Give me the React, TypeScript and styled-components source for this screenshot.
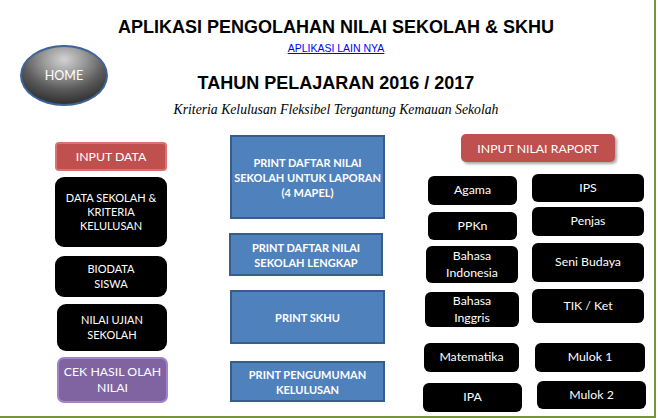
import styled, { createGlobalStyle } from "styled-components"

const GlobalStyle = createGlobalStyle`
  html, body {
    margin: 0;
    padding: 0;
    background: #ffffff;
  }
  body {
    font-family: "Liberation Sans", Arial, sans-serif;
  }
`

const leftMenu = [
  { label: "DATA SEKOLAH &\nKRITERIA\nKELULUSAN", h: 70, mt: 6, ml: 0, w: 112 },
  { label: "BIODATA\nSISWA", h: 41, mt: 9, ml: 0, w: 112 },
  { label: "NILAI UJIAN\nSEKOLAH", h: 47, mt: 7, ml: 2, w: 110 },
]

const printMenu = [
  { label: "PRINT DAFTAR NILAI\nSEKOLAH UNTUK LAPORAN\n(4 MAPEL)", h: 84, mt: 0, ml: 1, w: 155 },
  { label: "PRINT DAFTAR NILAI\nSEKOLAH LENGKAP", h: 43, mt: 14, ml: 0, w: 154 },
  { label: "PRINT SKHU", h: 54, mt: 14, ml: 1, w: 155 },
  { label: "PRINT PENGUMUMAN\nKELULUSAN", h: 41, mt: 17, ml: 1, w: 155 },
]

const subjectsLeft = [
  { label: "Agama", h: 29, mt: 14, ml: 5, w: 89 },
  { label: "PPKn", h: 28, mt: 7, ml: 5, w: 89 },
  { label: "Bahasa\nIndonesia", h: 37, mt: 6, ml: 3, w: 92 },
  { label: "Bahasa\nInggris", h: 35, mt: 9, ml: 2, w: 94 },
  { label: "Matematika", h: 29, mt: 16, ml: 1, w: 95 },
  { label: "IPA", h: 29, mt: 11, ml: 0, w: 99 },
]

const subjectsRight = [
  { label: "IPS", h: 28, mt: 12, ml: 0, w: 112 },
  { label: "Penjas", h: 29, mt: 5, ml: 0, w: 112 },
  { label: "Seni Budaya", h: 39, mt: 7, ml: 0, w: 112 },
  { label: "TIK / Ket", h: 34, mt: 7, ml: 0, w: 112 },
  { label: "Mulok 1", h: 29, mt: 20, ml: 3, w: 110 },
  { label: "Mulok 2", h: 28, mt: 9, ml: 5, w: 109 },
]

export default function App() {
  return (
    <>
      <GlobalStyle />
      <Sheet>
        <Header>
          <HomeCell>
            <HomeButton>HOME</HomeButton>
          </HomeCell>
          <TitleBlock>
            <MainTitle>APLIKASI PENGOLAHAN NILAI SEKOLAH &amp; SKHU</MainTitle>
            <OtherLink href="#">APLIKASI LAIN NYA</OtherLink>
            <YearTitle>TAHUN PELAJARAN 2016 / 2017</YearTitle>
            <Tagline>Kriteria Kelulusan Fleksibel Tergantung Kemauan Sekolah</Tagline>
          </TitleBlock>
          <div />
        </Header>

        <Body>
          <LeftColumn>
            <RedButton>INPUT DATA</RedButton>
            {leftMenu.map((m) => (
              <BlackMenu key={m.label} $h={m.h} $mt={m.mt} $ml={m.ml} $w={m.w}>
                {m.label}
              </BlackMenu>
            ))}
            <PurpleButton>CEK HASIL OLAH<br />NILAI</PurpleButton>
          </LeftColumn>

          <MiddleColumn>
            {printMenu.map((m) => (
              <PrintBox key={m.label} $h={m.h} $mt={m.mt} $ml={m.ml} $w={m.w}>
                {m.label}
              </PrintBox>
            ))}
          </MiddleColumn>

          <RightColumn>
            <RaportButton>INPUT NILAI RAPORT</RaportButton>
            <SubjectGrid>
              <SubjectColumn>
                {subjectsLeft.map((s) => (
                  <Subject key={s.label} $h={s.h} $mt={s.mt} $ml={s.ml} $w={s.w}>
                    {s.label}
                  </Subject>
                ))}
              </SubjectColumn>
              <SubjectColumn>
                {subjectsRight.map((s) => (
                  <Subject key={s.label} $h={s.h} $mt={s.mt} $ml={s.ml} $w={s.w}>
                    {s.label}
                  </Subject>
                ))}
              </SubjectColumn>
            </SubjectGrid>
          </RightColumn>
        </Body>
      </Sheet>
    </>
  )
}

type BoxProps = { $h: number; $mt: number; $ml: number; $w: number }

const Sheet = styled.div`
  width: 654px;
  height: 416px;
  border-right: 2px solid #77933c;
  border-bottom: 2px solid #77933c;
  background: #ffffff;
  overflow: hidden;
`

const Header = styled.div`
  height: 128px;
  display: grid;
  grid-template-columns: minmax(0, 1fr) auto minmax(0, 1fr);
`

const HomeCell = styled.div`
  padding: 45px 0 0 20px;
`

const HomeButton = styled.div`
  width: 84px;
  height: 57px;
  border-radius: 50%;
  border: 2px solid #3c6497;
  background: radial-gradient(ellipse 70% 75% at 50% 22%, #d2d2d2 0%, #9a9a9a 35%, #5a5a5a 70%, #353535 100%);
  color: #ffffff;
  font-family: Lato, "Liberation Sans", sans-serif;
  font-size: 12.5px;
  display: flex;
  align-items: center;
  justify-content: center;
`

const TitleBlock = styled.div`
  padding: 16px 0 0 18px;
  display: flex;
  flex-direction: column;
  align-items: center;
  white-space: nowrap;
`

const MainTitle = styled.h1`
  margin: 0;
  font-family: "Liberation Sans", Arial, sans-serif;
  font-size: 18px;
  line-height: 22px;
  font-weight: 700;
  color: #000000;
`

const OtherLink = styled.a`
  margin-top: 3px;
  font-family: "Liberation Sans", Arial, sans-serif;
  font-size: 10.5px;
  line-height: 14px;
  color: #0000ff;
  text-decoration: underline;
`

const YearTitle = styled.h2`
  margin: 17px 0 0;
  font-family: "Liberation Sans", Arial, sans-serif;
  font-size: 18px;
  line-height: 22px;
  font-weight: 700;
  color: #000000;
`

const Tagline = styled.div`
  margin-top: 8px;
  font-family: "Liberation Serif", "Times New Roman", serif;
  font-style: italic;
  font-size: 13.7px;
  line-height: 16px;
  color: #000000;
`

const Body = styled.div`
  display: flex;
  align-items: flex-start;
  padding-left: 55px;
`

const LeftColumn = styled.div`
  width: 113px;
  margin-top: 14px;
  display: flex;
  flex-direction: column;
`

const MiddleColumn = styled.div`
  width: 156px;
  margin: 7px 0 0 61px;
  display: flex;
  flex-direction: column;
`

const RightColumn = styled.div`
  width: 224px;
  margin: 6px 0 0 38px;
  display: flex;
  flex-direction: column;
`

const Label = styled.div`
  display: flex;
  align-items: center;
  justify-content: center;
  text-align: center;
  white-space: pre-line;
  box-sizing: border-box;
  color: #ffffff;
  font-family: Lato, "Liberation Sans", sans-serif;
`

const RedButton = styled(Label)`
  width: 112px;
  height: 29px;
  background: #c0504d;
  border: 2px solid #e0706d;
  border-radius: 4px;
  font-size: 12.3px;
`

const BlackMenu = styled(Label)<BoxProps>`
  width: ${(p) => p.$w}px;
  height: ${(p) => p.$h}px;
  margin: ${(p) => p.$mt}px 0 0 ${(p) => p.$ml}px;
  background: #000000;
  border-radius: 9px;
  font-size: 11px;
  line-height: 14.3px;
`

const PurpleButton = styled(Label)`
  width: 111px;
  height: 46px;
  margin: 6px 0 0 2px;
  background: #8064a2;
  border: 2px solid #9f84c6;
  border-radius: 7px;
  font-size: 12.3px;
  line-height: 16px;
`

const PrintBox = styled(Label)<BoxProps>`
  width: ${(p) => p.$w}px;
  height: ${(p) => p.$h}px;
  margin: ${(p) => p.$mt}px 0 0 ${(p) => p.$ml}px;
  background: #4f81bd;
  border: 2px solid #385d8a;
  font-size: 11px;
  font-weight: 700;
  line-height: 15px;
`

const RaportButton = styled(Label)`
  width: 154px;
  height: 28px;
  margin-left: 38px;
  background: #c0504d;
  border-radius: 5px;
  box-shadow: 2px 2px 3px rgba(0, 0, 0, 0.35);
  font-size: 12.3px;
`

const SubjectGrid = styled.div`
  display: grid;
  grid-template-columns: 99px 114px;
  column-gap: 10px;
`

const SubjectColumn = styled.div`
  display: flex;
  flex-direction: column;
`

const Subject = styled(Label)<BoxProps>`
  width: ${(p) => p.$w}px;
  height: ${(p) => p.$h}px;
  margin: ${(p) => p.$mt}px 0 0 ${(p) => p.$ml}px;
  background: #000000;
  border-radius: 6px;
  font-size: 12.3px;
  line-height: 16.5px;
`
